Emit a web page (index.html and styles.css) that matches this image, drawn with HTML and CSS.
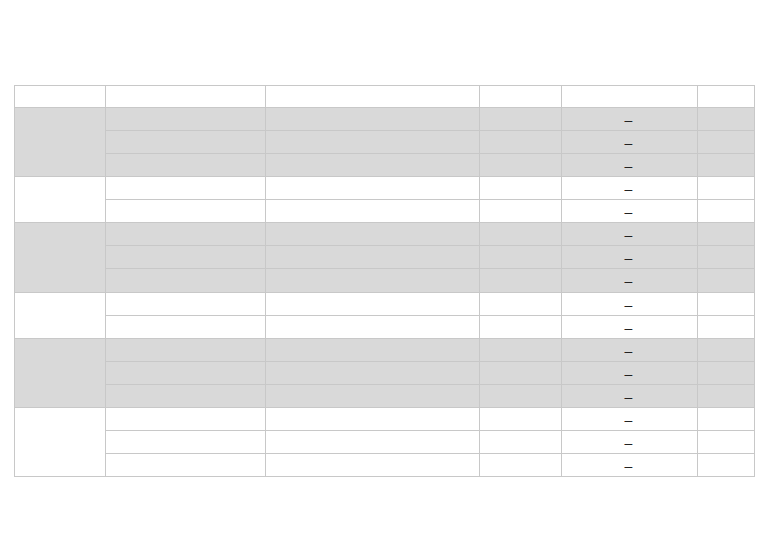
FILE: index.html
```html
<!DOCTYPE html>
<html>
<head>
<meta charset="utf-8">
<link rel="stylesheet" href="styles.css">
</head>
<body>
<div class="page">
  <div class="grid">
    <div class="cell head"></div>
    <div class="cell head"></div>
    <div class="cell head"></div>
    <div class="cell head"></div>
    <div class="cell head"></div>
    <div class="cell head"></div>

    <div class="cell group shade span3"></div>
    <div class="cell shade"></div><div class="cell shade"></div><div class="cell shade"></div><div class="cell shade dash">–</div><div class="cell shade"></div>
    <div class="cell shade"></div><div class="cell shade"></div><div class="cell shade"></div><div class="cell shade dash">–</div><div class="cell shade"></div>
    <div class="cell shade"></div><div class="cell shade"></div><div class="cell shade"></div><div class="cell shade dash">–</div><div class="cell shade"></div>

    <div class="cell group span2"></div>
    <div class="cell"></div><div class="cell"></div><div class="cell"></div><div class="cell dash">–</div><div class="cell"></div>
    <div class="cell"></div><div class="cell"></div><div class="cell"></div><div class="cell dash">–</div><div class="cell"></div>

    <div class="cell group shade span3"></div>
    <div class="cell shade"></div><div class="cell shade"></div><div class="cell shade"></div><div class="cell shade dash">–</div><div class="cell shade"></div>
    <div class="cell shade"></div><div class="cell shade"></div><div class="cell shade"></div><div class="cell shade dash">–</div><div class="cell shade"></div>
    <div class="cell shade"></div><div class="cell shade"></div><div class="cell shade"></div><div class="cell shade dash">–</div><div class="cell shade"></div>

    <div class="cell group span2"></div>
    <div class="cell"></div><div class="cell"></div><div class="cell"></div><div class="cell dash">–</div><div class="cell"></div>
    <div class="cell"></div><div class="cell"></div><div class="cell"></div><div class="cell dash">–</div><div class="cell"></div>

    <div class="cell group shade span3"></div>
    <div class="cell shade"></div><div class="cell shade"></div><div class="cell shade"></div><div class="cell shade dash">–</div><div class="cell shade"></div>
    <div class="cell shade"></div><div class="cell shade"></div><div class="cell shade"></div><div class="cell shade dash">–</div><div class="cell shade"></div>
    <div class="cell shade"></div><div class="cell shade"></div><div class="cell shade"></div><div class="cell shade dash">–</div><div class="cell shade"></div>

    <div class="cell group span3"></div>
    <div class="cell"></div><div class="cell"></div><div class="cell"></div><div class="cell dash">–</div><div class="cell"></div>
    <div class="cell"></div><div class="cell"></div><div class="cell"></div><div class="cell dash">–</div><div class="cell"></div>
    <div class="cell"></div><div class="cell"></div><div class="cell"></div><div class="cell dash">–</div><div class="cell"></div>
  </div>
</div>
</body>
</html>
```
FILE: styles.css
```css
html, body {
  margin: 0;
  padding: 0;
  background: #ffffff;
  font-family: "Liberation Sans", Arial, sans-serif;
}

.page {
  padding: 85px 14px 0 14px;
}

.grid {
  display: grid;
  grid-template-columns: 91px 160px 214px 82px 136px 57px;
  grid-template-rows: 22px;
  grid-auto-rows: 23.07px;
  width: 740px;
  border-left: 1px solid #c8c8c8;
  border-top: 1px solid #c8c8c8;
}

.cell {
  box-sizing: border-box;
  border-right: 1px solid #c8c8c8;
  border-bottom: 1px solid #c8c8c8;
  background: #ffffff;
}

.shade {
  background: #d9d9d9;
}

.group {
  grid-column: 1;
}

.span2 {
  grid-row: span 2;
}

.span3 {
  grid-row: span 3;
}

.dash {
  display: flex;
  align-items: center;
  justify-content: center;
  font-size: 14px;
  color: #222222;
  padding-top: 2px;
  padding-right: 2px;
}
```
